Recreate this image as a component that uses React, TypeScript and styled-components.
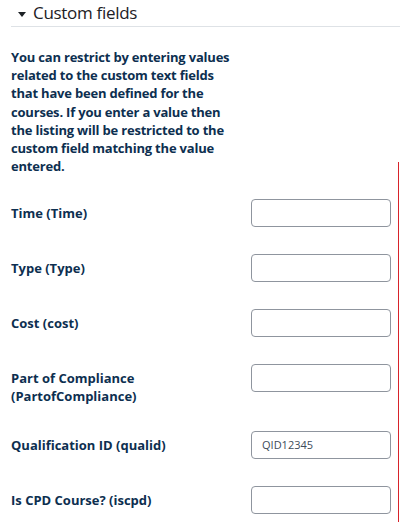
import * as React from "react";
import styled, { createGlobalStyle } from "styled-components";

const GlobalStyle = createGlobalStyle`
  html, body {
    margin: 0;
    padding: 0;
    background: #ffffff;
  }
  body {
    font-family: "Open Sans", "Noto Sans", Arial, sans-serif;
  }
`;

interface Field {
  label: string;
  value?: string;
}

const fields: Field[] = [
  { label: "Time (Time)" },
  { label: "Type (Type)" },
  { label: "Cost (cost)" },
  { label: "Part of Compliance (PartofCompliance)" },
  { label: "Qualification ID (qualid)", value: "QID12345" },
  { label: "Is CPD Course? (iscpd)" },
];

export default function App() {
  return (
    <React.Fragment>
      <GlobalStyle />
      <Page>
        <Fieldset>
          <Legend>
            <Caret />
            <LegendText>Custom fields</LegendText>
          </Legend>
          <Intro>
            You can restrict by entering values related to the custom text fields
            that have been defined for the courses. If you enter a value then the
            listing will be restricted to the custom field matching the value
            entered.
          </Intro>
          <Rows>
            {fields.map(f => (
              <Row key={f.label}>
                <Label>{f.label}</Label>
                <Input type="text" defaultValue={f.value || ""} />
              </Row>
            ))}
          </Rows>
        </Fieldset>
      </Page>
    </React.Fragment>
  );
}

const Page = styled.div`
  position: relative;
  width: 400px;
  height: 522px;
  overflow: hidden;

  &::after {
    content: "";
    position: absolute;
    left: 398px;
    top: 162px;
    width: 1px;
    bottom: 0;
    background: #d8232a;
  }
`;

const Fieldset = styled.div`
  padding-left: 11px;
`;

const Legend = styled.div`
  display: flex;
  align-items: center;
  height: 27px;
  border-bottom: 1px solid #dee2e6;
  padding-left: 7px;
  box-sizing: border-box;
`;

const Caret = styled.span`
  width: 0;
  height: 0;
  border-left: 4px solid transparent;
  border-right: 4px solid transparent;
  border-top: 5px solid #1d2125;
  margin-right: 7px;
  margin-top: 3px;
`;

const LegendText = styled.span`
  font-size: 17px;
  letter-spacing: -0.3px;
  line-height: 26px;
  color: #1d2125;
  margin-top: -1px;
`;

const Intro = styled.p`
  margin: 21px 0 0 0;
  width: 226px;
  font-size: 13px;
  font-weight: 700;
  letter-spacing: -0.2px;
  line-height: 18.2px;
  color: #0d2f50;
`;

const Rows = styled.div`
  margin-top: 24px;
  display: flex;
  flex-direction: column;
`;

const Row = styled.div`
  display: flex;
  align-items: flex-start;
`;

const Label = styled.div`
  width: 200px;
  margin-right: 40px;
  padding-top: 6px;
  margin-bottom: 25px;
  font-size: 13px;
  font-weight: 700;
  line-height: 17.6px;
  color: #0d2f50;
`;

const Input = styled.input`
  box-sizing: border-box;
  width: 140px;
  height: 28px;
  margin: 0 0 27px 0;
  padding: 0 10px;
  border: 1px solid #8f959e;
  border-radius: 4px;
  font-family: "Open Sans", "Noto Sans", Arial, sans-serif;
  font-size: 11px;
  color: #3d4b5a;
  background: #ffffff;
  outline: none;
`;
